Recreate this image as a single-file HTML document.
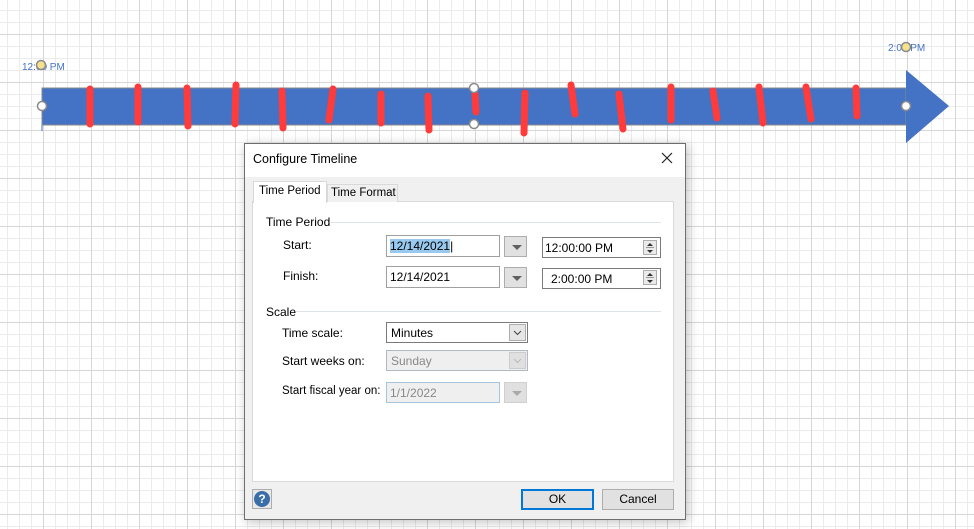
<!DOCTYPE html>
<html><head><meta charset="utf-8"><style>
*{margin:0;padding:0;box-sizing:border-box}
body{width:974px;height:529px;overflow:hidden;background:#fff;font-family:"Liberation Sans",sans-serif;font-size:12px;color:#000;position:relative}
.a{position:absolute;white-space:nowrap}
.inp{position:absolute;background:#fff;border:1px solid #a0a0a0;padding:2px 0 0 5px;font-size:12px;line-height:16px;white-space:nowrap}
.btn{position:absolute;background:#e1e1e1;border:1px solid #adadad}
.tri{position:absolute;left:7px;top:8px;width:0;height:0;border-left:5px solid transparent;border-right:5px solid transparent;border-top:5px solid #606060}
</style></head><body>
<svg class="a" style="left:0;top:0" width="974" height="529">
<defs>
<pattern id="mi" x="7" y="10" width="12" height="12" patternUnits="userSpaceOnUse"><path d="M0.5 0V12M0 0.5H12" stroke="#ebebeb" stroke-width="1"/></pattern>
<pattern id="ma" x="43" y="34" width="48" height="48" patternUnits="userSpaceOnUse"><path d="M0.5 0V48M0 0.5H48" stroke="#d6d6d6" stroke-width="1"/></pattern>
</defs>
<rect width="974" height="529" fill="url(#mi)"/>
<rect width="974" height="529" fill="url(#ma)"/>
<rect x="42" y="88" width="864" height="37" fill="#4472c4" stroke="#8a8a8a" stroke-width="1"/>
<polygon points="906,70 949,106 906,143" fill="#4472c4"/>
<line x1="42" y1="125" x2="42" y2="131" stroke="#4472c4"/>
<g stroke="#ff3b3b" stroke-width="7" stroke-linecap="round" fill="none">
<line x1="90" y1="89" x2="90" y2="124"/>
<line x1="138" y1="87" x2="138" y2="122"/>
<line x1="187" y1="88" x2="188" y2="126"/>
<line x1="236" y1="85" x2="235" y2="124"/>
<line x1="282" y1="91" x2="283" y2="128"/>
<line x1="333" y1="89" x2="329" y2="120"/>
<line x1="381" y1="94" x2="381" y2="123"/>
<line x1="428" y1="96" x2="429" y2="130"/>
<line x1="475" y1="94" x2="476" y2="112"/>
<line x1="525" y1="93" x2="524" y2="133"/>
<line x1="571" y1="85" x2="575" y2="114"/>
<line x1="619" y1="94" x2="623" y2="129"/>
<line x1="671" y1="87" x2="671" y2="120"/>
<line x1="713" y1="91" x2="717" y2="118"/>
<line x1="759" y1="87" x2="763" y2="123"/>
<line x1="806" y1="87" x2="811" y2="119"/>
<line x1="856" y1="88" x2="857" y2="116"/>
</g>
<g fill="#fff" stroke="#8a8a8a" stroke-width="1.5">
<circle cx="42" cy="106" r="4.5"/><circle cx="906" cy="106" r="4.5"/>
<circle cx="474" cy="88" r="4.5"/><circle cx="474" cy="124" r="4.5"/>
</g>
<text x="22" y="70" font-family="Liberation Sans" font-size="10" fill="#4472c4">12:00 PM</text>
<text x="888" y="51" font-family="Liberation Sans" font-size="10" fill="#4472c4">2:00 PM</text>
<g fill="#f5e28a" stroke="#8a8a8a" stroke-width="1.5">
<circle cx="41" cy="65" r="4.5"/><circle cx="906" cy="47" r="4.5"/>
</g>
</svg>

<div class="a" style="left:244px;top:143px;width:442px;height:377px;background:#f0f0f0;border:1px solid #6e6e6e;box-shadow:2px 2px 10px rgba(0,0,0,.25)">
<div class="a" style="left:0;top:0;width:440px;height:33px;background:#fff"></div>
<div class="a" style="left:8px;top:8px;font-size:12.5px">Configure Timeline</div>
<svg class="a" style="left:415px;top:7px" width="14" height="14"><path d="M2 2L12 12M12 2L2 12" stroke="#222" stroke-width="1.2"/></svg>
<div class="a" style="left:7px;top:57px;width:422px;height:281px;background:#fff;border:1px solid #d9d9d9"></div>
<div class="a" style="left:82px;top:40px;width:71px;height:18px;background:#f0f0f0;border:1px solid #d9d9d9;border-bottom:none;padding:2px 0 0 3px;font-size:11.5px">Time Format</div>
<div class="a" style="left:8px;top:37px;width:74px;height:22px;background:#fff;border:1px solid #d9d9d9;border-bottom:none;padding:3px 0 0 5px;font-size:11.5px">Time Period</div>
</div>
<div class="a" style="left:331px;top:222px;width:330px;height:1px;background:#dde3ea"></div>
<div class="a" style="left:266px;top:215px">Time Period</div>
<div class="a" style="left:283px;top:238px">Start:</div>
<div class="inp" style="left:386px;top:235px;width:114px;height:22px;padding-left:3px"><span style="background:#99c9ef">12/14/2021</span>|</div>
<div class="btn" style="left:504px;top:236px;width:23px;height:21px"><div class="tri"></div></div>
<div class="inp" style="left:542px;top:237px;width:119px;height:21px;border-color:#7a7a7a;padding-left:2px">12:00:00 PM</div>
<div class="btn" style="left:643px;top:240px;width:14px;height:15px;background:#eaeaea"><div class="a" style="left:3px;top:2px;border-left:3px solid transparent;border-right:3px solid transparent;border-bottom:3px solid #333"></div><div class="a" style="left:2px;top:6px;width:8px;height:1px;background:#999"></div><div class="a" style="left:3px;top:9px;border-left:3px solid transparent;border-right:3px solid transparent;border-top:3px solid #333"></div></div>
<div class="a" style="left:283px;top:269px">Finish:</div>
<div class="inp" style="left:386px;top:266px;width:114px;height:22px;padding-left:3px">12/14/2021</div>
<div class="btn" style="left:504px;top:267px;width:23px;height:21px"><div class="tri"></div></div>
<div class="inp" style="left:542px;top:268px;width:119px;height:21px;border-color:#7a7a7a;padding-left:8px">2:00:00 PM</div>
<div class="btn" style="left:643px;top:270px;width:14px;height:15px;background:#eaeaea"><div class="a" style="left:3px;top:2px;border-left:3px solid transparent;border-right:3px solid transparent;border-bottom:3px solid #333"></div><div class="a" style="left:2px;top:6px;width:8px;height:1px;background:#999"></div><div class="a" style="left:3px;top:9px;border-left:3px solid transparent;border-right:3px solid transparent;border-top:3px solid #333"></div></div>
<div class="a" style="left:296px;top:311px;width:365px;height:1px;background:#dde3ea"></div>
<div class="a" style="left:266px;top:305px">Scale</div>
<div class="a" style="left:282px;top:326px">Time scale:</div>
<div class="inp" style="left:386px;top:322px;width:142px;height:21px;border-color:#7a7a7a;padding-left:4px">Minutes</div>
<div class="a" style="left:509px;top:324px;width:17px;height:17px;background:#e6e6e6;border:1px solid #adadad"><svg width="15" height="15"><path d="M4 6L7.5 9.5L11 6" stroke="#444" fill="none"/></svg></div>
<div class="a" style="left:282px;top:354px">Start weeks on:</div>
<div class="inp" style="left:386px;top:350px;width:142px;height:21px;background:#efefef;border-color:#b0b8c0;color:#888;padding-left:4px">Sunday</div>
<div class="a" style="left:509px;top:352px;width:17px;height:17px;background:#e0e0e0;border:1px solid #ccc"><svg width="15" height="15"><path d="M4 6L7.5 9.5L11 6" stroke="#bbb" fill="none"/></svg></div>
<div class="a" style="left:282px;top:385px;font-size:11.5px">Start fiscal year on:</div>
<div class="inp" style="left:386px;top:382px;width:114px;height:21px;background:#efefef;border-color:#a8c4dc;color:#888;padding-left:3px">1/1/2022</div>
<div class="btn" style="left:504px;top:382px;width:23px;height:21px;background:#e0e0e0;border-color:#d0d0d0"><div class="tri" style="border-top-color:#aaa"></div></div>
<div class="a" style="left:252px;top:489px;width:20px;height:20px;border:1px solid #adadad;background:#e8e8e8"><div class="a" style="left:1px;top:1px;width:16px;height:16px;border-radius:50%;background:#3a6ea8;color:#fff;font-weight:bold;font-size:12px;text-align:center;line-height:16px">?</div></div>
<div class="a" style="left:521px;top:489px;width:73px;height:21px;background:#e1e1e1;border:2px solid #0078d7;text-align:center;line-height:17px">OK</div>
<div class="a" style="left:602px;top:489px;width:72px;height:21px;background:#e1e1e1;border:1px solid #adadad;text-align:center;line-height:19px">Cancel</div>
</body></html>
